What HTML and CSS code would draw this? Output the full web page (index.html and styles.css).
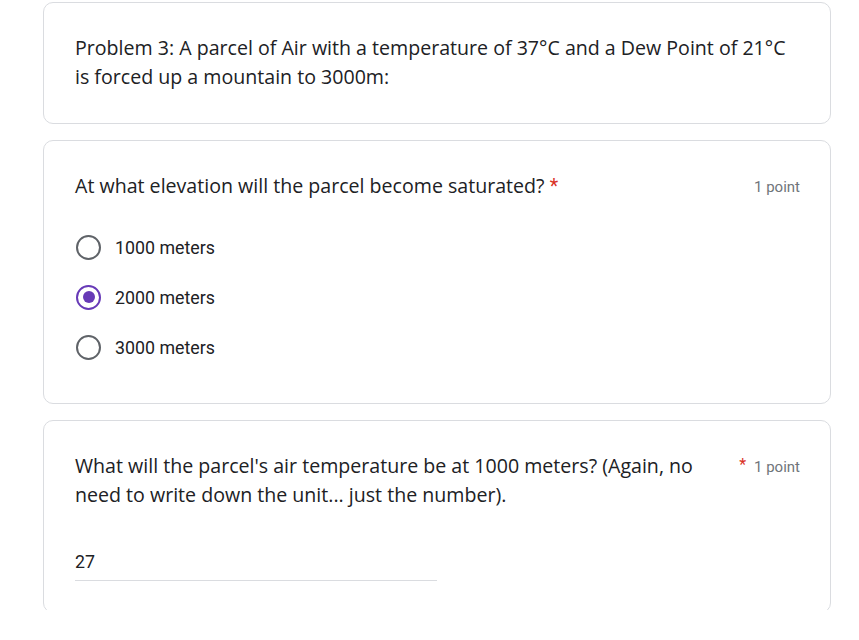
FILE: index.html
```html
<!DOCTYPE html>
<html lang="en">
<head>
<meta charset="utf-8">
<title>Form</title>
<link rel="stylesheet" href="styles.css">
</head>
<body>
<div class="viewport">
  <div class="form">
    <section class="card intro">
      <div class="section-title">Problem 3: A parcel of Air with a temperature of 37°C and a Dew Point of 21°C is forced up a mountain to 3000m:</div>
    </section>

    <section class="card">
      <div class="q-head">
        <div class="q-title">At what elevation will the parcel become saturated? <span class="req">*</span></div>
        <div class="q-points">1 point</div>
      </div>
      <div class="options">
        <label class="option"><span class="radio"></span><span class="opt-text">1000 meters</span></label>
        <label class="option"><span class="radio checked"><span class="dot"></span></span><span class="opt-text">2000 meters</span></label>
        <label class="option"><span class="radio"></span><span class="opt-text">3000 meters</span></label>
      </div>
    </section>

    <section class="card">
      <div class="q-head">
        <div class="q-title wide">What will the parcel's air temperature be at 1000 meters? (Again, no need to write down the unit... just the number).</div>
        <div class="q-points"><span class="req">*</span>1 point</div>
      </div>
      <div class="answer">
        <div class="answer-field">27</div>
      </div>
    </section>
  </div>
</div>
</body>
</html>
```

FILE: styles.css
```css
* { box-sizing: border-box; }
html, body {
  margin: 0;
  padding: 0;
  background: #ffffff;
}
.viewport {
  height: 610px;
  overflow: hidden;
}
.form {
  width: 788px;
  margin-left: 43px;
  padding-top: 2px;
  display: flex;
  flex-direction: column;
  gap: 16px;
}
.card {
  background: #fff;
  border: 1px solid #dadce0;
  border-radius: 10px;
  padding: 30px 30px 31px 31px;
}
.card.intro {
  padding-bottom: 32px;
}
.section-title,
.q-title {
  font-family: "Open Sans", "Noto Sans", sans-serif;
  font-size: 19.6px;
  line-height: 29px;
  color: #202124;
}
.q-head {
  display: flex;
  align-items: flex-start;
  gap: 16px;
}
.q-title {
  flex: 1;
}
.q-title.wide {
  flex: 0 0 640px;
}
.req {
  color: #d93025;
  font-family: "Roboto", sans-serif;
}
.q-points {
  margin-left: auto;
  padding-top: 2px;
  font-family: "Roboto", sans-serif;
  font-size: 15px;
  line-height: 29px;
  color: #70757a;
  white-space: nowrap;
}
.q-points .req {
  margin-right: 8px;
  font-size: 16px;
  vertical-align: top;
  position: relative;
  top: -3px;
}
.options {
  margin-top: 20px;
  display: flex;
  flex-direction: column;
}
.option {
  height: 50px;
  display: flex;
  align-items: center;
}
.radio {
  width: 25px;
  height: 25px;
  border: 2.5px solid #5f6368;
  border-radius: 50%;
  display: flex;
  align-items: center;
  justify-content: center;
  margin-left: 1px;
}
.radio.checked {
  border-color: #673ab7;
}
.dot {
  width: 12px;
  height: 12px;
  border-radius: 50%;
  background: #673ab7;
}
.opt-text {
  margin-left: 14px;
  font-family: "Roboto", sans-serif;
  font-size: 17.8px;
  color: #202124;
}
.answer {
  margin-top: 34px;
}
.answer-field {
  width: 362px;
  height: 38px;
  border-bottom: 1px solid #dadce0;
  font-family: "Roboto", sans-serif;
  font-size: 17.8px;
  line-height: 38px;
  color: #202124;
}
```
